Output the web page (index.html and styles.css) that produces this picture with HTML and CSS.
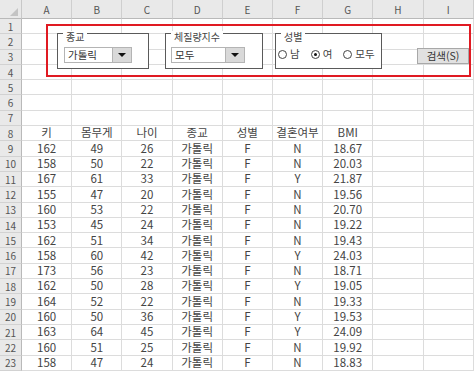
FILE: index.html
```html
<!DOCTYPE html>
<html lang="ko">
<head>
    <meta charset="UTF-8">
    <meta name="viewport" content="width=device-width, initial-scale=1.0">
    <title>검색 시트</title>
    <link rel="stylesheet" href="styles.css">
</head>

<body>
    <div class="sheet" id="sheet"></div>

    <div class="form-box">
        <div class="frame frame-religion">
            <span class="legend">종교</span>
            <div class="combo combo-religion">
                <span class="combo-value">가톨릭</span>
                <span class="combo-btn"><span class="arrow"></span></span>
            </div>
        </div>
        <div class="frame frame-bmi">
            <span class="legend">체질량지수</span>
            <div class="combo combo-bmi">
                <span class="combo-value">모두</span>
                <span class="combo-btn"><span class="arrow"></span></span>
            </div>
        </div>
        <div class="frame frame-sex">
            <span class="legend">성별</span>
            <div class="radios">
                <label class="radio"><span class="dot"></span>남</label>
                <label class="radio"><span class="dot checked"></span>여</label>
                <label class="radio"><span class="dot"></span>모두</label>
            </div>
        </div>
        <button class="search-btn">검색(S)</button>
    </div>

    <script>
        const columns = ["A", "B", "C", "D", "E", "F", "G", "H", "I"];
        const header = ["키", "몸무게", "나이", "종교", "성별", "결혼여부", "BMI"];
        const rows = [
            [162, 49, 26, "가톨릭", "F", "N", "18.67"],
            [158, 50, 22, "가톨릭", "F", "N", "20.03"],
            [167, 61, 33, "가톨릭", "F", "Y", "21.87"],
            [155, 47, 20, "가톨릭", "F", "N", "19.56"],
            [160, 53, 22, "가톨릭", "F", "N", "20.70"],
            [153, 45, 24, "가톨릭", "F", "N", "19.22"],
            [162, 51, 34, "가톨릭", "F", "N", "19.43"],
            [158, 60, 42, "가톨릭", "F", "Y", "24.03"],
            [173, 56, 23, "가톨릭", "F", "N", "18.71"],
            [162, 50, 28, "가톨릭", "F", "Y", "19.05"],
            [164, 52, 22, "가톨릭", "F", "N", "19.33"],
            [160, 50, 36, "가톨릭", "F", "Y", "19.53"],
            [163, 64, 45, "가톨릭", "F", "Y", "24.09"],
            [160, 51, 25, "가톨릭", "F", "N", "19.92"],
            [158, 47, 24, "가톨릭", "F", "N", "18.83"]
        ];

        const sheet = document.getElementById("sheet");

        function addCell(text, cls) {
            const div = document.createElement("div");
            div.className = cls;
            div.textContent = text;
            sheet.appendChild(div);
        }

        // column headers
        const corner = document.createElement("div");
        corner.className = "corner";
        corner.innerHTML = '<span class="corner-mark"></span>';
        sheet.appendChild(corner);
        columns.forEach(col => addCell(col, "col-head"));

        for (let r = 1; r <= 23; r++) {
            addCell(r, "row-head");
            let values = [];
            if (r === 8) values = header;
            if (r >= 9) values = rows[r - 9];
            for (let c = 0; c < columns.length; c++) {
                addCell(values[c] !== undefined ? values[c] : "", "cell");
            }
        }
    </script>
</body>
</html>
```

FILE: styles.css
```css
body {
    margin: 0;
    font-family: "Noto Sans CJK KR", "Noto Sans", sans-serif;
    background: white;
    color: #333;
    overflow: hidden;
}
.sheet {
    display: grid;
    grid-template-columns: 22px repeat(9, 50.2px);
    grid-template-rows: 19px repeat(23, 15.3px);
    width: 474px;
}
.corner {
    background: #e9e9e9;
    border-right: 1px solid #c8c8c8;
    border-bottom: 1px solid #b9b9b9;
    display: flex;
    align-items: flex-end;
    justify-content: flex-end;
    padding: 0 3px 2px 0;
}
.corner-mark {
    width: 0;
    height: 0;
    border-left: 8px solid transparent;
    border-bottom: 8px solid #c4c4c4;
}
.col-head {
    background: #e9e9e9;
    border-right: 1px solid #cfcfcf;
    border-bottom: 1px solid #b9b9b9;
    font-size: 10px;
    color: #555;
    display: flex;
    align-items: center;
    justify-content: center;
}
.row-head {
    background: #e9e9e9;
    border-right: 1px solid #b9b9b9;
    border-bottom: 1px solid #d2d2d2;
    font-size: 10px;
    color: #555;
    display: flex;
    align-items: center;
    justify-content: center;
}
.cell {
    border-right: 1px solid #dcdcdc;
    border-bottom: 1px solid #dcdcdc;
    font-size: 11.5px;
    color: #444;
    display: flex;
    align-items: center;
    justify-content: center;
    line-height: 1;
    white-space: nowrap;
}

/* controls sitting over the sheet */
.form-box {
    position: absolute;
    left: 46px;
    top: 24px;
    border: 2px solid #e01a22;
    display: flex;
    align-items: flex-start;
    padding-left: 9px;
    padding-top: 7px;
    width: 412px;
    height: 42px;
}
.frame {
    position: relative;
    border: 1px solid #5a5a5a;
    background: white;
    box-sizing: border-box;
    height: 36px;
}
.frame-religion {
    width: 92px;
    margin-right: 16px;
}
.frame-bmi {
    width: 98px;
    margin-right: 12px;
}
.frame-sex {
    width: 107px;
    margin-right: 35px;
}
.legend {
    position: absolute;
    left: 5px;
    top: -3px;
    padding: 0 3px;
    background: white;
    font-size: 10px;
    line-height: 12px;
    color: #444;
}
.combo {
    position: absolute;
    top: 13px;
    height: 16px;
    border: 1px solid #b4b4b4;
    box-sizing: border-box;
    display: flex;
    background: white;
}
.combo-religion {
    left: 6px;
    width: 68px;
}
.combo-bmi {
    left: 5px;
    width: 74px;
}
.combo-value {
    flex-grow: 1;
    font-size: 10.5px;
    line-height: 14px;
    padding-left: 3px;
    color: #333;
}
.combo-btn {
    width: 18px;
    background: #d9d9d9;
    border-left: 1px solid #b4b4b4;
    display: flex;
    align-items: center;
    justify-content: center;
}
.arrow {
    width: 0;
    height: 0;
    border-left: 4px solid transparent;
    border-right: 4px solid transparent;
    border-top: 4px solid #111;
}
.radios {
    position: absolute;
    left: 2px;
    top: 14px;
    display: flex;
    gap: 11px;
}
.radio {
    display: flex;
    align-items: center;
    gap: 3px;
    font-size: 10.5px;
    line-height: 12px;
    color: #444;
}
.dot {
    width: 9px;
    height: 9px;
    border: 1px solid #444;
    border-radius: 50%;
    box-sizing: border-box;
    position: relative;
    background: white;
}
.dot.checked::after {
    content: "";
    position: absolute;
    left: 2px;
    top: 2px;
    width: 3px;
    height: 3px;
    border-radius: 50%;
    background: #111;
}
.search-btn {
    margin-top: 15px;
    width: 52px;
    height: 16px;
    padding: 0;
    border: 1px solid #a8a8a8;
    background: #e1e1e1;
    font-family: "Noto Sans CJK KR", "Noto Sans", sans-serif;
    font-size: 10.5px;
    line-height: 14px;
    color: #333;
}
```
